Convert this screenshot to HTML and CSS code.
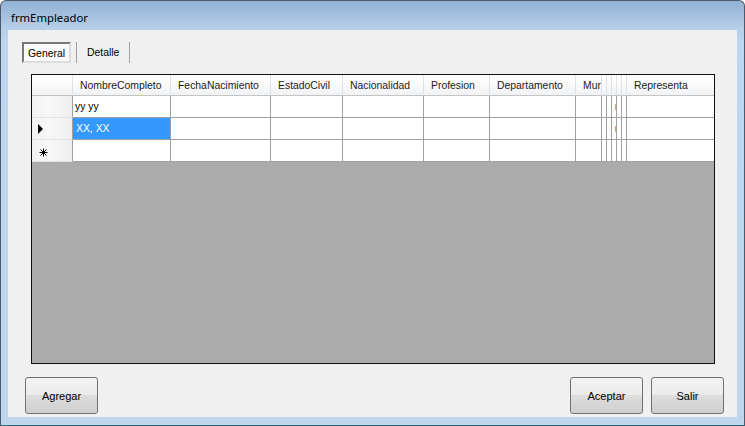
FILE: index.html
```html
<!DOCTYPE html>
<html>
<head>
<meta charset="utf-8">
<link rel="stylesheet" href="styles.css">
</head>
<body>
<div class="window">
  <div class="titlebar"><span class="title">frmEmpleador</span></div>
  <div class="client">
    <div class="tabs">
      <span class="tab active">General</span>
      <span class="sep"></span>
      <span class="tab">Detalle</span>
      <span class="sep"></span>
    </div>
    <div class="grid">
      <div class="row head">
        <div class="c c0"></div>
        <div class="c c1">NombreCompleto</div>
        <div class="c c2">FechaNacimiento</div>
        <div class="c c3">EstadoCivil</div>
        <div class="c c4">Nacionalidad</div>
        <div class="c c5">Profesion</div>
        <div class="c c6">Departamento</div>
        <div class="c c7">Mur</div>
        <div class="c cn"></div>
        <div class="c cn"></div>
        <div class="c cn"></div>
        <div class="c cn"></div>
        <div class="c cn"></div>
        <div class="c c8">Representa</div>
      </div>
      <div class="row">
        <div class="c c0 rh"></div>
        <div class="c c1">yy yy</div>
        <div class="c c2"></div>
        <div class="c c3"></div>
        <div class="c c4"></div>
        <div class="c c5"></div>
        <div class="c c6"></div>
        <div class="c c7"></div>
        <div class="c cn"></div>
        <div class="c cn"></div>
        <div class="c cn"><span class="mark"></span></div>
        <div class="c cn"></div>
        <div class="c cn"></div>
        <div class="c c8"></div>
      </div>
      <div class="row">
        <div class="c c0 rh"><span class="arrow"></span></div>
        <div class="c c1 sel">XX, XX</div>
        <div class="c c2"></div>
        <div class="c c3"></div>
        <div class="c c4"></div>
        <div class="c c5"></div>
        <div class="c c6"></div>
        <div class="c c7"></div>
        <div class="c cn"></div>
        <div class="c cn"></div>
        <div class="c cn"><span class="mark"></span></div>
        <div class="c cn"></div>
        <div class="c cn"></div>
        <div class="c c8"></div>
      </div>
      <div class="row">
        <div class="c c0 rh"><svg class="star" width="9" height="9" viewBox="0 0 9 9"><path d="M4.5 0.5V8.5M0.5 4.5H8.5M1.5 1.5L7.5 7.5M7.5 1.5L1.5 7.5" stroke="#000" stroke-width="1" fill="none"/></svg></div>
        <div class="c c1"></div>
        <div class="c c2"></div>
        <div class="c c3"></div>
        <div class="c c4"></div>
        <div class="c c5"></div>
        <div class="c c6"></div>
        <div class="c c7"></div>
        <div class="c cn"></div>
        <div class="c cn"></div>
        <div class="c cn"></div>
        <div class="c cn"></div>
        <div class="c cn"></div>
        <div class="c c8"></div>
      </div>
    </div>
    <div class="buttons">
      <button class="btn">Agregar</button>
      <span class="spacer"></span>
      <button class="btn">Aceptar</button>
      <button class="btn">Salir</button>
    </div>
  </div>
</div>
</body>
</html>
```
FILE: styles.css
```css
html, body {
  margin: 0;
  padding: 0;
  background: #ffffff;
}
.window {
  width: 745px;
  height: 426px;
  box-sizing: border-box;
  border: 1px solid #4b5a6b;
  border-bottom-color: #2f6674;
  border-radius: 6px 6px 0 0;
  background: linear-gradient(to bottom, #93b1d4 0px, #b6cfea 28px, #bdd5ee 40px, #bfd6ee 100%);
  padding: 0 7px 8px 7px;
  font-family: "Liberation Sans", Arial, sans-serif;
  font-size: 10.4px;
  color: #000;
}
.titlebar {
  height: 29px;
  display: flex;
  align-items: center;
  padding-left: 3px;
  padding-top: 4px;
  box-sizing: border-box;
}
.title {
  font-family: "Noto Sans", "Open Sans", sans-serif;
  font-size: 11.3px;
  color: #000;
}
.client {
  width: 729px;
  height: 387px;
  background: #f0f0f0;
  display: flex;
  flex-direction: column;
}
.tabs {
  display: flex;
  align-items: stretch;
  height: 21px;
  margin: 12px 0 0 14px;
}
.tab {
  display: flex;
  align-items: center;
  justify-content: center;
  padding: 0 10px 0 10px;
  box-sizing: border-box;
}
.tab.active {
  width: 49px;
  padding: 0;
  border: 2px solid;
  border-color: #777777 #dcdcdc #dcdcdc #777777;
  background: #fafafa;
  padding-top: 1px;
}
.sep {
  width: 1px;
  background: #a0a0a0;
  margin-left: 5px;
}
.tab + .sep { margin-left: 0; }
.tab.active + .sep { margin-left: 5px; }
.grid {
  margin: 11px 0 0 23px;
  width: 684px;
  height: 290px;
  box-sizing: border-box;
  border: 1px solid #101010;
  background: #ababab;
}
.row {
  display: flex;
  height: 22px;
  background: #ffffff;
}
.row.head {
  height: 21px;
  background: linear-gradient(to bottom, #ffffff 0%, #fafafa 50%, #eff1f4 100%);
}
.c {
  box-sizing: border-box;
  border-right: 1px solid #a0a0a0;
  border-bottom: 1px solid #a0a0a0;
  white-space: nowrap;
  overflow: hidden;
  display: flex;
  align-items: center;
  padding-left: 2px;
  flex: none;
}
.head .c {
  border-right-color: #dfe2e6;
  border-bottom-color: #c4c4c4;
  padding-left: 7px;
  color: #1a1a1a;
}
.c0 { width: 41px; }
.c1 { width: 98px; }
.c2 { width: 100px; }
.c3 { width: 72px; }
.c4 { width: 81px; }
.c5 { width: 66px; }
.c6 { width: 86px; }
.c7 { width: 26px; }
.cn { width: 5px; padding-left: 0; }
.head .cn { padding-left: 0; }
.c8 { width: 87px; border-right: none; }
.rh {
  background: linear-gradient(to right, #f2f2f2 0%, #f8f8f8 40%, #efefef 100%);
  border-bottom-color: #e2e2e2;
  padding-left: 0;
}
.head .c0 { padding-left: 0; }
.sel {
  background: #3399ff;
  color: #ffffff;
  padding-left: 3px;
}
.arrow {
  width: 0;
  height: 0;
  border-left: 5px solid #000;
  border-top: 5px solid transparent;
  border-bottom: 5px solid transparent;
  margin-left: 6px;
  margin-top: 1px;
}
.star {
  margin-left: 7px;
  margin-top: 3px;
}
.mark {
  width: 1px;
  height: 6px;
  background: #f0a050;
  margin-left: 3px;
}
.buttons {
  display: flex;
  margin: 13px 13px 0 17px;
  gap: 8px;
}
.spacer { flex: 1; }
.btn {
  width: 73px;
  height: 37px;
  box-sizing: border-box;
  border: 1px solid #707070;
  border-radius: 3px;
  background: linear-gradient(to bottom, #f3f3f3 0%, #ebebeb 50%, #dddddd 50%, #cfcfcf 100%);
  font-family: "Liberation Sans", Arial, sans-serif;
  font-size: 11px;
  color: #000;
  padding: 0;
  margin: 0;
}
```
